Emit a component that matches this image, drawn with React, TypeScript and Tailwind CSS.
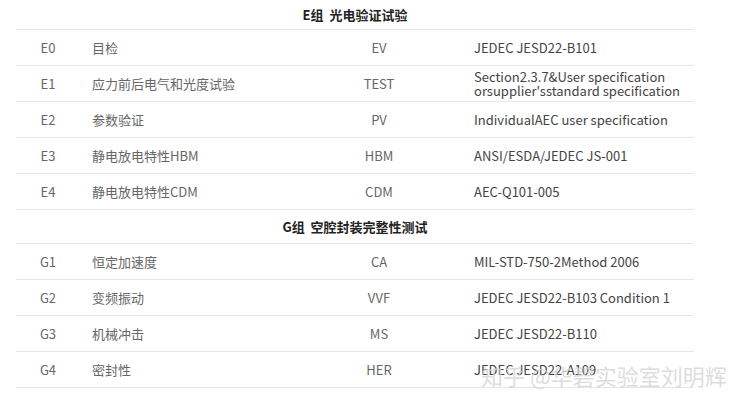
import React from "react";

type Row = [string, string, string, string | string[]];

const eRows: Row[] = [
  ["E0", "目检", "EV", "JEDEC JESD22-B101"],
  ["E1", "应力前后电气和光度试验", "TEST", ["Section2.3.7&User specification", "orsupplier'sstandard specification"]],
  ["E2", "参数验证", "PV", "IndividualAEC user specification"],
  ["E3", "静电放电特性HBM", "HBM", "ANSI/ESDA/JEDEC JS-001"],
  ["E4", "静电放电特性CDM", "CDM", "AEC-Q101-005"],
];

const gRows: Row[] = [
  ["G1", "恒定加速度", "CA", "MIL-STD-750-2Method 2006"],
  ["G2", "变频振动", "VVF", "JEDEC JESD22-B103 Condition 1"],
  ["G3", "机械冲击", "MS", "JEDEC JESD22-B110"],
  ["G4", "密封性", "HER", "JEDEC JESD22-A109"],
];

function DataRow({ r }: { r: Row }) {
  const last = r[3];
  return (
    <div className="flex h-[36px] items-center border-t border-[#e6e6e6] text-[13px] text-[#666]">
      <div className="w-[64px] text-center">{r[0]}</div>
      <div className="w-[250px] pl-3">{r[1]}</div>
      <div className="w-[98px] text-center">{r[2]}</div>
      <div className="flex-1 pl-[46px] text-[#444]">
        {Array.isArray(last) ? (
          <div className="leading-[14px]">
            {last.map((l) => (
              <div key={l}>{l}</div>
            ))}
          </div>
        ) : (
          last
        )}
      </div>
    </div>
  );
}

export default function App() {
  return (
    <div
      className="relative h-[407px] w-[750px] overflow-hidden bg-white"
      style={{ fontFamily: '"Noto Sans CJK SC", "Noto Sans", sans-serif' }}
    >
      <div className="ml-[16px] w-[678px]">
        <div className="flex h-[29px] items-center justify-center text-[13px] font-bold text-[#222]">
          E组&nbsp;&nbsp;光电验证试验
        </div>
        {eRows.map((r) => (
          <DataRow key={r[0]} r={r} />
        ))}
        <div className="flex h-[34px] items-center justify-center border-t border-[#e6e6e6] text-[13px] font-bold text-[#222]">
          G组&nbsp;&nbsp;空腔封装完整性测试
        </div>
        {gRows.map((r) => (
          <DataRow key={r[0]} r={r} />
        ))}
        <div className="border-t border-[#e6e6e6]" />
      </div>
      <div className="absolute left-[481px] top-[361px] text-[22px] leading-[28px] text-[#d4d4d4]/80">
        知乎 @华碧实验室刘明辉
      </div>
    </div>
  );
}
